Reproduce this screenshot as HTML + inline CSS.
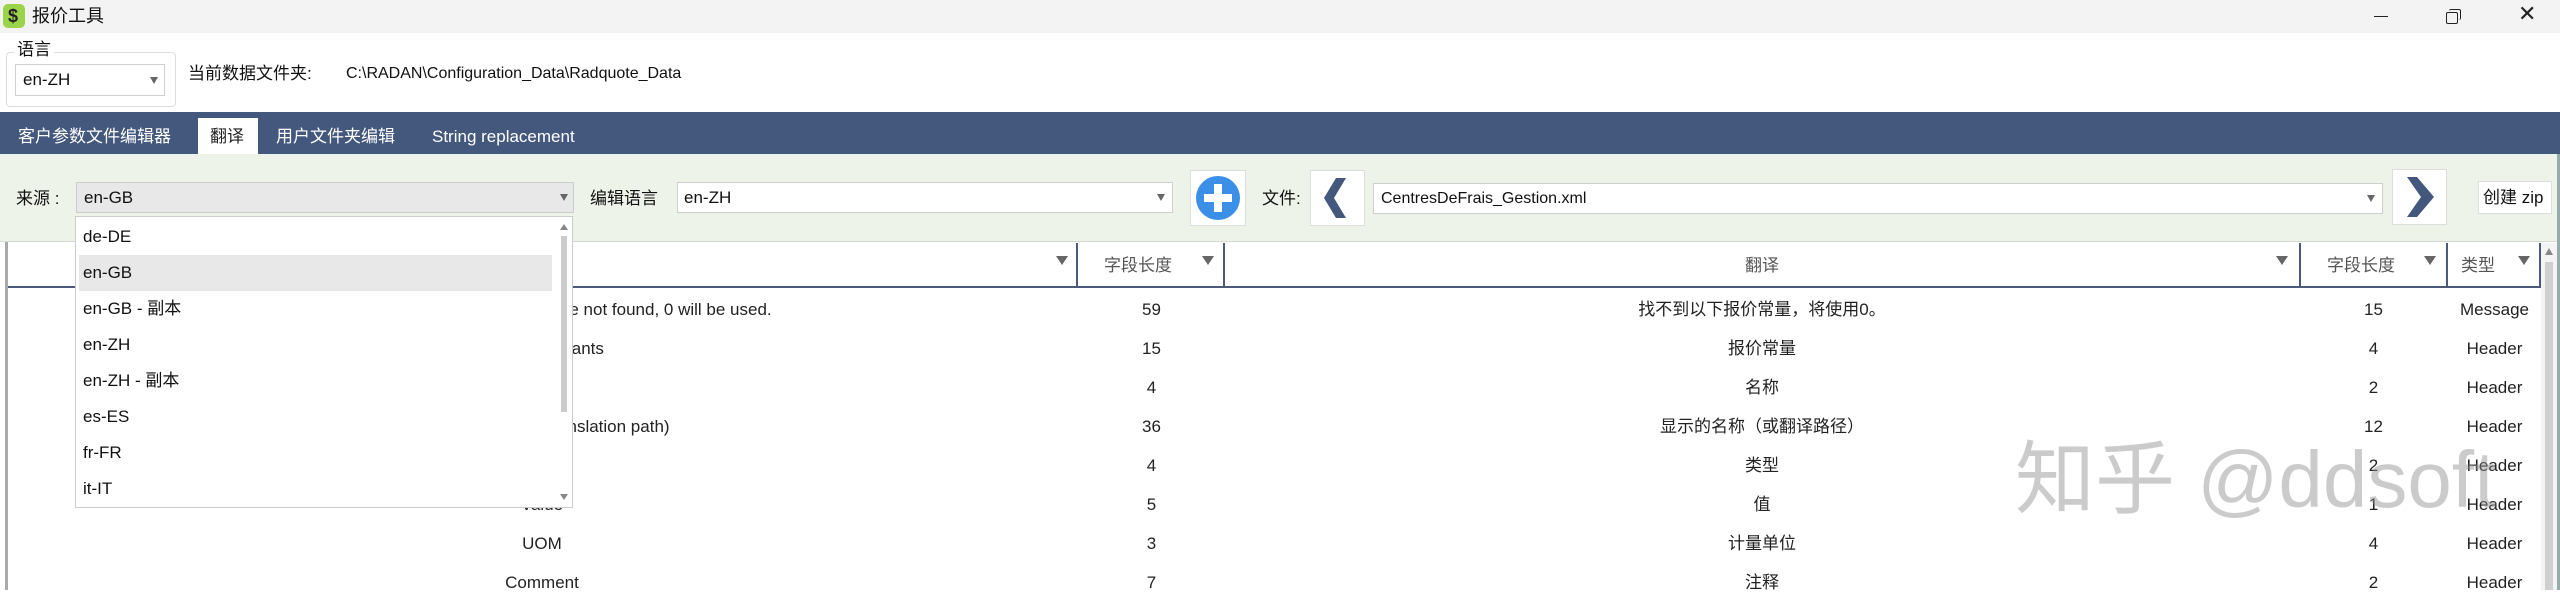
<!DOCTYPE html>
<html><head><meta charset="utf-8"><style>
*{box-sizing:border-box;margin:0;padding:0}
body{width:2560px;height:590px;overflow:hidden;background:#fff;font-family:"Liberation Sans","Noto Sans CJK SC",sans-serif;font-size:17px;color:#111;position:relative}
.a{position:absolute}
.t{position:absolute;white-space:nowrap;line-height:20px}
.combo{position:absolute;border:1px solid #cfcfcf;background:#fff}
.arr{position:absolute;width:0;height:0;border-left:4px solid transparent;border-right:4px solid transparent;border-top:7px solid #666}
.hd{position:absolute;top:243px;height:45px;line-height:45px;color:#555;text-align:center;font-size:17px}
.fl{position:absolute;top:256px;width:0;height:0;border-left:6px solid transparent;border-right:6px solid transparent;border-top:9px solid #666}
.vl{position:absolute;top:243px;width:2px;height:45px;background:#4a5a78}
.cell{position:absolute;text-align:center;height:39px;line-height:39px;font-size:17px;color:#222}
.item{position:absolute;left:83px;height:36px;line-height:36px;font-size:17px;color:#111}
</style></head><body>
<!-- title bar -->
<div class="a" style="left:0;top:0;width:2560px;height:33px;background:#f3f3f3"></div>
<div class="a" style="left:3px;top:4px;width:22px;height:24px;background:#9bd34a;border-radius:5px"></div>
<div class="t" style="left:8px;top:6px;font-weight:bold;font-size:18px;color:#222">$</div>
<div class="t" style="left:32px;top:6px;font-size:18px">报价工具</div>
<div class="a" style="left:2374px;top:16px;width:14px;height:1px;background:#222"></div>
<div class="a" style="left:2446px;top:12px;width:12px;height:12px;border:1.5px solid #222;border-radius:2px;background:#f3f3f3"></div>
<div class="a" style="left:2449px;top:9px;width:12px;height:11px;border-top:1.5px solid #222;border-right:1.5px solid #222;border-radius:2px"></div>
<div class="t" style="left:2518px;top:4px;font-size:22px;color:#222">✕</div>
<!-- language group -->
<div class="a" style="left:6px;top:52px;width:170px;height:55px;border:1px solid #ddd;border-radius:4px"></div>
<div class="t" style="left:14px;top:40px;background:#fff;padding:0 3px">语言</div>
<div class="combo" style="left:15px;top:64px;width:150px;height:32px"></div>
<div class="t" style="left:23px;top:70px">en-ZH</div>
<div class="arr" style="left:150px;top:77px"></div>
<div class="t" style="left:188px;top:64px">当前数据文件夹:</div>
<div class="t" style="left:346px;top:64px;font-size:16px">C:\RADAN\Configuration_Data\Radquote_Data</div>
<!-- tabs -->
<div class="a" style="left:0;top:112px;width:2560px;height:42px;background:#44577d"></div>
<div class="a" style="left:198px;top:118px;width:60px;height:36px;background:#fff"></div>
<div class="t" style="left:18px;top:127px;color:#fff">客户参数文件编辑器</div>
<div class="t" style="left:210px;top:127px;color:#222">翻译</div>
<div class="t" style="left:276px;top:127px;color:#fff">用户文件夹编辑</div>
<div class="t" style="left:432px;top:127px;color:#fff">String replacement</div>
<!-- toolbar -->
<div class="a" style="left:0;top:154px;width:2560px;height:88px;background:#eef3e9;border-bottom:1px solid #d6dbd2"></div>
<div class="a" style="left:2557px;top:154px;width:3px;height:436px;background:#9aa"></div>
<div class="t" style="left:16px;top:189px">来源 :</div>
<div class="combo" style="left:76px;top:182px;width:498px;height:31px;background:#e8e8e8;border-color:#ccc"></div>
<div class="t" style="left:84px;top:188px">en-GB</div>
<div class="arr" style="left:560px;top:194px"></div>
<div class="t" style="left:590px;top:189px">编辑语言</div>
<div class="combo" style="left:677px;top:182px;width:496px;height:31px"></div>
<div class="t" style="left:684px;top:188px">en-ZH</div>
<div class="arr" style="left:1157px;top:194px"></div>
<div class="a" style="left:1190px;top:170px;width:56px;height:56px;background:#fff;border:1px solid #ddd"></div>
<div class="a" style="left:1196px;top:176px;width:44px;height:44px;border-radius:50%;background:#3b8fe6"></div>
<div class="a" style="left:1214px;top:184px;width:8px;height:28px;background:#fff"></div>
<div class="a" style="left:1204px;top:194px;width:28px;height:8px;background:#fff"></div>
<div class="t" style="left:1262px;top:189px">文件:</div>
<div class="a" style="left:1310px;top:170px;width:55px;height:56px;background:#fff;border:1px solid #ddd"></div>
<svg class="a" style="left:1310px;top:170px" width="55" height="56"><polygon points="36,8 26,8 14,28 26,48 36,48 24,28" fill="#44577d"/></svg>
<div class="combo" style="left:1373px;top:183px;width:1010px;height:31px"></div>
<div class="t" style="left:1381px;top:189px;font-size:16px">CentresDeFrais_Gestion.xml</div>
<div class="arr" style="left:2367px;top:195px"></div>
<div class="a" style="left:2392px;top:169px;width:55px;height:56px;background:#fff;border:1px solid #ddd"></div>
<svg class="a" style="left:2392px;top:169px" width="55" height="56"><polygon points="15,8 25,8 42,28 25,48 15,48 29,28" fill="#44577d"/></svg>
<div class="a" style="left:2478px;top:181px;width:74px;height:33px;background:#fff;border:1px solid #ddd"></div>
<div class="t" style="left:2483px;top:188px;font-size:17px">创建 zip</div>
<!-- grid header -->
<div class="a" style="left:5px;top:242px;width:3px;height:348px;background:#aaa"></div>
<div class="a" style="left:8px;top:286px;width:2533px;height:2px;background:#4a5a78"></div>
<div class="vl" style="left:1076px"></div><div class="vl" style="left:1223px"></div><div class="vl" style="left:2299px"></div><div class="vl" style="left:2446px"></div><div class="vl" style="left:2539px"></div>
<div class="fl" style="left:1056px"></div><div class="fl" style="left:1202px"></div><div class="fl" style="left:2276px"></div><div class="fl" style="left:2424px"></div><div class="fl" style="left:2518px"></div>
<div class="hd" style="left:1078px;width:120px">字段长度</div>
<div class="hd" style="left:1225px;width:1074px">翻译</div>
<div class="hd" style="left:2301px;width:120px">字段长度</div>
<div class="hd" style="left:2448px;width:60px">类型</div>
<div class="a" style="left:2541px;top:243px;width:16px;height:347px;background:#f4f4f4"></div>
<div class="a" style="left:2545px;top:262px;width:8px;height:328px;background:#cfcfcf"></div>
<div class="arr" style="left:2545px;top:248px;border-top:0;border-bottom:7px solid #888"></div>
<!-- rows -->
<div class="a" style="left:0;top:290px">
<div class="cell" style="left:8px;width:1068px;top:0">The following quote constants were not found, 0 will be used.</div>
<div class="cell" style="left:1078px;width:147px;top:0">59</div>
<div class="cell" style="left:1225px;width:1074px;top:0">找不到以下报价常量，将使用0。</div>
<div class="cell" style="left:2301px;width:145px;top:0">15</div>
<div class="cell" style="left:2448px;width:93px;top:0">Message</div>
<div class="cell" style="left:8px;width:1068px;top:39px">Quote constants</div>
<div class="cell" style="left:1078px;width:147px;top:39px">15</div>
<div class="cell" style="left:1225px;width:1074px;top:39px">报价常量</div>
<div class="cell" style="left:2301px;width:145px;top:39px">4</div>
<div class="cell" style="left:2448px;width:93px;top:39px">Header</div>
<div class="cell" style="left:8px;width:1068px;top:78px">Name</div>
<div class="cell" style="left:1078px;width:147px;top:78px">4</div>
<div class="cell" style="left:1225px;width:1074px;top:78px">名称</div>
<div class="cell" style="left:2301px;width:145px;top:78px">2</div>
<div class="cell" style="left:2448px;width:93px;top:78px">Header</div>
<div class="cell" style="left:8px;width:1068px;top:117px">Display name (or translation path)</div>
<div class="cell" style="left:1078px;width:147px;top:117px">36</div>
<div class="cell" style="left:1225px;width:1074px;top:117px">显示的名称（或翻译路径）</div>
<div class="cell" style="left:2301px;width:145px;top:117px">12</div>
<div class="cell" style="left:2448px;width:93px;top:117px">Header</div>
<div class="cell" style="left:8px;width:1068px;top:156px">Type</div>
<div class="cell" style="left:1078px;width:147px;top:156px">4</div>
<div class="cell" style="left:1225px;width:1074px;top:156px">类型</div>
<div class="cell" style="left:2301px;width:145px;top:156px">2</div>
<div class="cell" style="left:2448px;width:93px;top:156px">Header</div>
<div class="cell" style="left:8px;width:1068px;top:195px">Value</div>
<div class="cell" style="left:1078px;width:147px;top:195px">5</div>
<div class="cell" style="left:1225px;width:1074px;top:195px">值</div>
<div class="cell" style="left:2301px;width:145px;top:195px">1</div>
<div class="cell" style="left:2448px;width:93px;top:195px">Header</div>
<div class="cell" style="left:8px;width:1068px;top:234px">UOM</div>
<div class="cell" style="left:1078px;width:147px;top:234px">3</div>
<div class="cell" style="left:1225px;width:1074px;top:234px">计量单位</div>
<div class="cell" style="left:2301px;width:145px;top:234px">4</div>
<div class="cell" style="left:2448px;width:93px;top:234px">Header</div>
<div class="cell" style="left:8px;width:1068px;top:273px">Comment</div>
<div class="cell" style="left:1078px;width:147px;top:273px">7</div>
<div class="cell" style="left:1225px;width:1074px;top:273px">注释</div>
<div class="cell" style="left:2301px;width:145px;top:273px">2</div>
<div class="cell" style="left:2448px;width:93px;top:273px">Header</div>
</div>
<!-- watermark -->
<div class="t" style="left:2015px;top:435px;line-height:90px;font-size:80px;color:rgba(140,140,140,0.45)">知乎 @ddsoft</div>
<!-- dropdown -->
<div class="a" style="left:75px;top:216px;width:498px;height:292px;background:#fff;border:1px solid #ccc"></div>
<div class="a" style="left:79px;top:255px;width:473px;height:36px;background:#e8e8e8"></div>
<div class="a" style="left:561px;top:236px;width:6px;height:176px;background:#ccc"></div>
<div class="arr" style="left:560px;top:224px;border-top:0;border-bottom:6px solid #888"></div>
<div class="arr" style="left:560px;top:494px;border-top:6px solid #888"></div>
<div class="item" style="top:219px">de-DE</div>
<div class="item" style="top:255px">en-GB</div>
<div class="item" style="top:291px">en-GB - 副本</div>
<div class="item" style="top:327px">en-ZH</div>
<div class="item" style="top:363px">en-ZH - 副本</div>
<div class="item" style="top:399px">es-ES</div>
<div class="item" style="top:435px">fr-FR</div>
<div class="item" style="top:471px">it-IT</div>
</body></html>
